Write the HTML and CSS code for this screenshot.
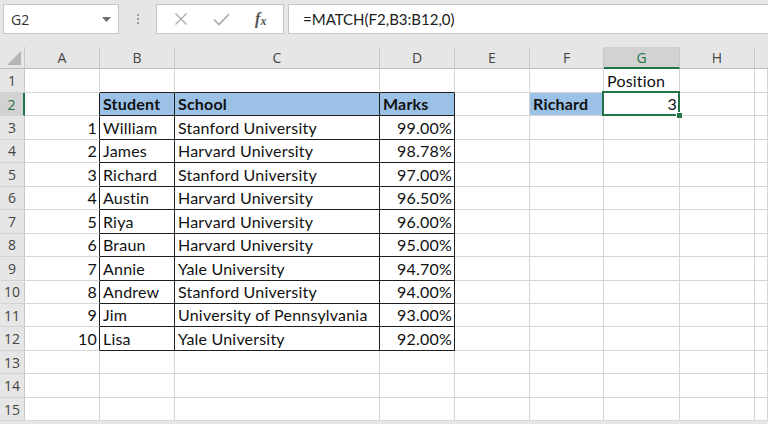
FILE: index.html
```html
<!DOCTYPE html>
<html>
<head>
<meta charset="utf-8">
<link rel="stylesheet" href="styles.css">
</head>
<body>
<div class="toolbar">
  <div class="namebox">
    <span class="nb-text">G2</span>
    <svg class="nb-arrow" width="9" height="5" viewBox="0 0 9 5"><path d="M0 0H9L4.5 5Z" fill="#6e6e6e"/></svg>
  </div>
  <div class="grip"><i></i><i></i><i></i></div>
  <div class="fxbox">
    <svg class="ico" width="14" height="14" viewBox="0 0 14 14"><path d="M1.5 1.5L12.5 12.5M12.5 1.5L1.5 12.5" stroke="#a9a9a9" stroke-width="1.3" fill="none"/></svg>
    <svg class="ico" width="17" height="13" viewBox="0 0 17 13"><path d="M1 6.5L6 11.5L16 1" stroke="#a9a9a9" stroke-width="1.6" fill="none"/></svg>
    <span class="fx">f<sub>x</sub></span>
  </div>
  <div class="formula">=MATCH(F2,B3:B12,0)</div>
</div>

<div class="sheet">
  <div class="h corner"><svg width="14" height="14" viewBox="0 0 14 14"><path d="M14 0V14H0Z" fill="#b5b5b5"/></svg></div>
  <div class="h">A</div><div class="h">B</div><div class="h">C</div><div class="h">D</div><div class="h">E</div><div class="h">F</div><div class="h hsel">G</div><div class="h">H</div><div class="h last"></div>

  <div class="r">1</div>
  <div class="c"></div><div class="c tt"></div><div class="c tt"></div><div class="c tt"></div><div class="c"></div><div class="c"></div><div class="c">Position</div><div class="c"></div><div class="c"></div>

  <div class="r rsel">2</div>
  <div class="c tl"></div><div class="c tb fill b">Student</div><div class="c tb fill b">School</div><div class="c tb fill b">Marks</div><div class="c"></div><div class="c fill b">Richard</div><div class="c num sel">3</div><div class="c"></div><div class="c"></div>

  <div class="r">3</div>
  <div class="c tl num">1</div><div class="c tb">William</div><div class="c tb">Stanford University</div><div class="c tb num">99.00%</div><div class="c"></div><div class="c"></div><div class="c"></div><div class="c"></div><div class="c"></div>

  <div class="r">4</div>
  <div class="c tl num">2</div><div class="c tb">James</div><div class="c tb">Harvard University</div><div class="c tb num">98.78%</div><div class="c"></div><div class="c"></div><div class="c"></div><div class="c"></div><div class="c"></div>

  <div class="r">5</div>
  <div class="c tl num">3</div><div class="c tb">Richard</div><div class="c tb">Stanford University</div><div class="c tb num">97.00%</div><div class="c"></div><div class="c"></div><div class="c"></div><div class="c"></div><div class="c"></div>

  <div class="r">6</div>
  <div class="c tl num">4</div><div class="c tb">Austin</div><div class="c tb">Harvard University</div><div class="c tb num">96.50%</div><div class="c"></div><div class="c"></div><div class="c"></div><div class="c"></div><div class="c"></div>

  <div class="r">7</div>
  <div class="c tl num">5</div><div class="c tb">Riya</div><div class="c tb">Harvard University</div><div class="c tb num">96.00%</div><div class="c"></div><div class="c"></div><div class="c"></div><div class="c"></div><div class="c"></div>

  <div class="r">8</div>
  <div class="c tl num">6</div><div class="c tb">Braun</div><div class="c tb">Harvard University</div><div class="c tb num">95.00%</div><div class="c"></div><div class="c"></div><div class="c"></div><div class="c"></div><div class="c"></div>

  <div class="r">9</div>
  <div class="c tl num">7</div><div class="c tb">Annie</div><div class="c tb">Yale University</div><div class="c tb num">94.70%</div><div class="c"></div><div class="c"></div><div class="c"></div><div class="c"></div><div class="c"></div>

  <div class="r">10</div>
  <div class="c tl num">8</div><div class="c tb">Andrew</div><div class="c tb">Stanford University</div><div class="c tb num">94.00%</div><div class="c"></div><div class="c"></div><div class="c"></div><div class="c"></div><div class="c"></div>

  <div class="r">11</div>
  <div class="c tl num">9</div><div class="c tb">Jim</div><div class="c tb">University of Pennsylvania</div><div class="c tb num">93.00%</div><div class="c"></div><div class="c"></div><div class="c"></div><div class="c"></div><div class="c"></div>

  <div class="r">12</div>
  <div class="c tl num">10</div><div class="c tb">Lisa</div><div class="c tb">Yale University</div><div class="c tb num">92.00%</div><div class="c"></div><div class="c"></div><div class="c"></div><div class="c"></div><div class="c"></div>

  <div class="r">13</div>
  <div class="c"></div><div class="c"></div><div class="c"></div><div class="c"></div><div class="c"></div><div class="c"></div><div class="c"></div><div class="c"></div><div class="c"></div>

  <div class="r">14</div>
  <div class="c"></div><div class="c"></div><div class="c"></div><div class="c"></div><div class="c"></div><div class="c"></div><div class="c"></div><div class="c"></div><div class="c"></div>

  <div class="r">15</div>
  <div class="c"></div><div class="c"></div><div class="c"></div><div class="c"></div><div class="c"></div><div class="c"></div><div class="c"></div><div class="c"></div><div class="c"></div>
</div>
</body>
</html>
```

FILE: styles.css
```css
html, body {
  margin: 0;
  padding: 0;
  background: #e6e6e6;
  overflow: hidden;
}
body {
  width: 768px;
  height: 424px;
  font-family: "Lato", "Noto Sans", sans-serif;
}

.toolbar {
  height: 47px;
  box-sizing: border-box;
  padding: 4px 0 0 3px;
  display: flex;
  align-items: flex-start;
  background: #e6e6e6;
}
.namebox {
  width: 116px;
  height: 30px;
  box-sizing: border-box;
  background: #fff;
  border: 1px solid #c6c6c6;
  display: flex;
  align-items: center;
  justify-content: space-between;
  padding: 0 7px 0 7px;
}
.nb-text {
  font-family: "Open Sans", "Noto Sans", sans-serif;
  font-size: 14px;
  color: #333;
}
.grip {
  width: 37px;
  height: 30px;
  display: flex;
  flex-direction: column;
  align-items: center;
  justify-content: center;
  gap: 2px;
}
.grip i {
  display: block;
  width: 2px;
  height: 2px;
  background: #9a9a9a;
}
.fxbox {
  width: 128px;
  height: 30px;
  box-sizing: border-box;
  background: #fff;
  border: 1px solid #c6c6c6;
  display: flex;
  align-items: center;
  justify-content: space-around;
  padding: 0 4px;
}
.fx {
  font-family: "Liberation Serif", serif;
  font-style: italic;
  font-weight: bold;
  font-size: 16px;
  color: #555;
}
.fx sub {
  font-size: 12px;
  vertical-align: -1px;
}
.formula {
  flex: 1;
  margin-left: 4px;
  height: 30px;
  box-sizing: border-box;
  background: #fff;
  border: 1px solid #c6c6c6;
  border-right: none;
  display: flex;
  align-items: center;
  padding-left: 14px;
  font-size: 15px;
  color: #222;
}

.sheet {
  display: grid;
  grid-template-columns: 25px 75px 75px 205px 75px 75px 74px 76px 75px 1fr;
  grid-template-rows: 22.3px repeat(15, 23.47px);
  background: #fff;
  font-size: 16px;
  letter-spacing: 0.2px;
  color: #111;
}

.h {
  background: #e6e6e6;
  border-right: 1px solid #c8c8c8;
  border-bottom: 1px solid #bdbdbd;
  display: flex;
  align-items: center;
  justify-content: center;
  font-family: "Open Sans", "Noto Sans", sans-serif;
  font-size: 14px;
  letter-spacing: 0;
  color: #444;
}
.h.last { border-right: none; }
.corner {
  justify-content: flex-end;
  align-items: flex-end;
  padding: 0 3px 3px 0;
}
.hsel {
  background: #d2d2d2;
  color: #217346;
  border-bottom: 2px solid #217346;
}

.r {
  background: #e6e6e6;
  border-right: 1px solid #c8c8c8;
  border-bottom: 1px solid #d4d4d4;
  display: flex;
  align-items: center;
  justify-content: center;
  font-family: "Open Sans", "Noto Sans", sans-serif;
  font-size: 14px;
  letter-spacing: 0;
  color: #444;
}
.rsel {
  background: #d2d2d2;
  color: #217346;
  border-right: 2px solid #217346;
}

.c {
  position: relative;
  border-right: 1px solid #d6d6d6;
  border-bottom: 1px solid #d6d6d6;
  display: flex;
  align-items: flex-end;
  padding: 0 2px 1px 3px;
  line-height: 20px;
  white-space: nowrap;
  overflow: visible;
}
.num { justify-content: flex-end; }
.b { font-weight: bold; }
.fill { background: #9bc2e6; }
.tb {
  border-right-color: #1e1e1e;
  border-bottom-color: #1e1e1e;
}
.tl { border-right-color: #1e1e1e; }
.tt { border-bottom-color: #1e1e1e; }

.sel::after {
  content: "";
  position: absolute;
  left: -2px;
  top: -2px;
  right: -1px;
  bottom: -1px;
  border: 2px solid #217346;
}
.sel::before {
  content: "";
  position: absolute;
  right: -4px;
  bottom: -4px;
  width: 5px;
  height: 5px;
  background: #217346;
  border: 1px solid #fff;
  z-index: 2;
}
```
